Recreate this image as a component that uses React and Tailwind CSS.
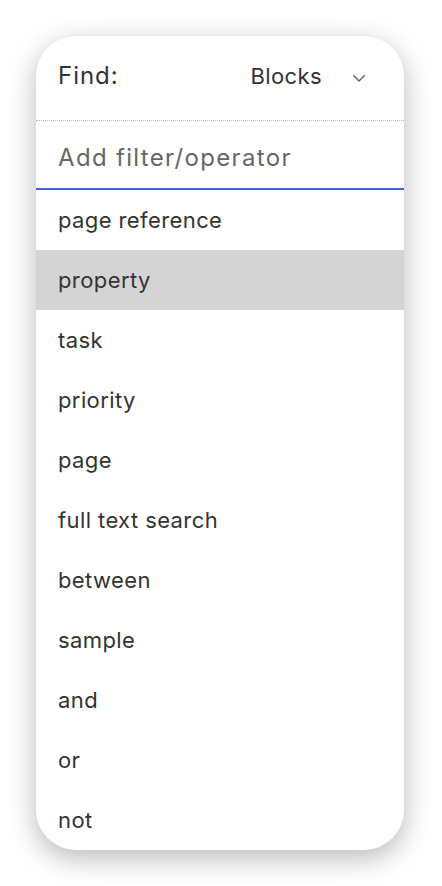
import React from "react";

const ITEMS = [
    "page reference", "property", "task", "priority", "page",
    "full text search", "between", "sample", "and", "or", "not"
];

export default function App() {
    return (
        <div className="min-h-screen bg-white pt-9 pl-9" style={{ fontFamily: "Inter, 'Noto Sans', sans-serif" }}>
            <div className="w-[368px] h-[814px] bg-white rounded-[40px] overflow-hidden shadow-[0_8px_28px_rgba(0,0,0,0.28)] flex flex-col tracking-[0.025em]">
                <div className="h-[85px] flex items-center px-[22px] pb-[4px] border-b border-dotted border-[#b8b8b8]">
                    <span className="text-[24px] tracking-[0.04em] text-[#333]">Find:</span>
                    <span className="ml-auto text-[22px] text-[#333]">Blocks</span>
                    <svg width="18" height="18" viewBox="0 0 24 24" fill="none" stroke="#666" strokeWidth="2" strokeLinecap="round" strokeLinejoin="round" className="ml-[28px] mr-[14px] mt-1">
                        <path d="M5 9l7 7 7-7" />
                    </svg>
                </div>
                <div className="h-[69px] flex items-center px-[22px] pt-[6px] border-b-2 border-[#3f66df]">
                    <span className="text-[24px] tracking-[0.055em] text-[#666]">Add filter/operator</span>
                </div>
                {ITEMS.map(it => (
                    <div key={it} className={`h-[60px] shrink-0 flex items-center px-[22px] text-[22px] text-[#333] ${it === "property" ? "bg-[#d4d4d4]" : ""}`}>
                        {it}
                    </div>
                ))}
            </div>
        </div>
    );
}
